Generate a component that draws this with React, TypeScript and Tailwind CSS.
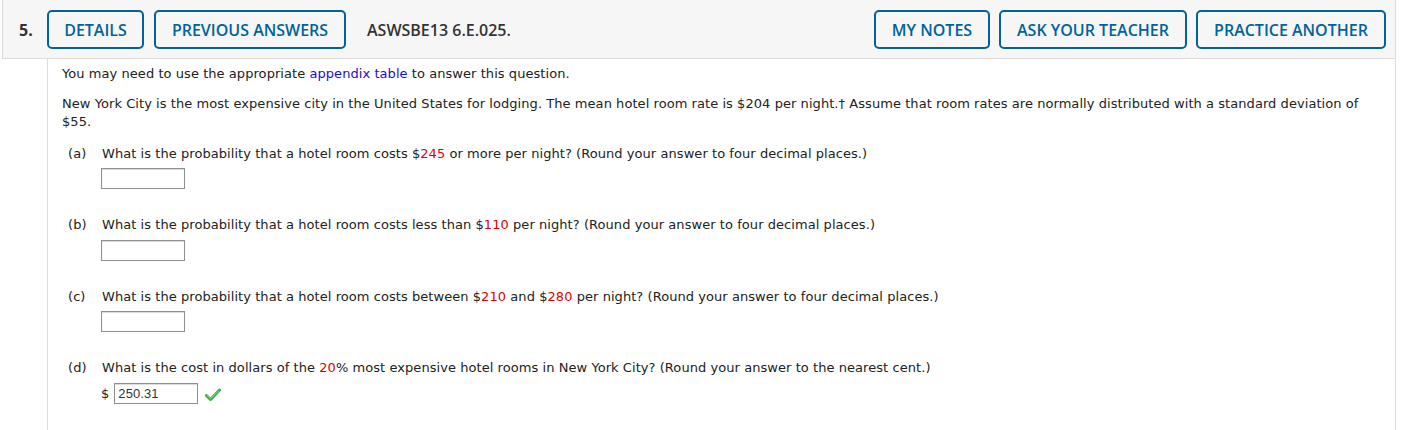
import React from "react";

const btn =
  "h-[39px] flex items-center justify-center border-2 border-[#0063a0] rounded-[5px] text-[#00639c] text-[16px] font-semibold bg-[#f6f6f6] whitespace-nowrap";

function Box({ value }: { value?: string }) {
  return (
    <div className="w-[84px] h-[21px] border border-[#8f8f8f] bg-white shadow-[inset_0_1px_1px_rgba(0,0,0,0.15)] flex items-center px-[3px] text-[13px] text-[#333]" style={{ fontFamily: '"Liberation Sans", Arial, sans-serif' }}>
      {value}
    </div>
  );
}

function Red({ children }: { children: React.ReactNode }) {
  return <span className="text-[#e00000]">{children}</span>;
}

export default function App() {
  return (
    <div className="w-[1408px] h-[430px] bg-white overflow-hidden">
      <div
        className="ml-[2px] w-[1394px] h-[59px] bg-[#f6f6f6] border-l border-r border-b border-[#dcdcdc] flex items-center pt-[1px]"
        style={{ fontFamily: '"Open Sans", sans-serif' }}
      >
        <div className="w-[44px] pl-[16px] text-[16px] font-bold text-[#333]">5.</div>
        <div className="flex gap-[10px]">
          <div className={btn + " w-[97px]"}>DETAILS</div>
          <div className={btn + " w-[192px]"}>PREVIOUS ANSWERS</div>
        </div>
        <div className="ml-[21px] text-[16px] font-semibold text-[#333]">ASWSBE13 6.E.025.</div>
        <div className="ml-auto mr-[9px] flex gap-[9px]">
          <div className={btn + " w-[116px]"}>MY NOTES</div>
          <div className={btn + " w-[188px]"}>ASK YOUR TEACHER</div>
          <div className={btn + " w-[190px]"}>PRACTICE ANOTHER</div>
        </div>
      </div>
      <div
        className="ml-[47px] w-[1349px] h-[371px] border-l border-r border-[#dcdcdc] pl-[14px] pr-[20px] pt-[6px] text-[13px] text-[#222] leading-[18px] tracking-[0.06px]"
        style={{ fontFamily: '"DejaVu Sans", Verdana, sans-serif' }}
      >
        <p>
          You may need to use the appropriate <span className="text-[#1a0dd6]">appendix table</span> to answer this question.
        </p>
        <p className="mt-[12px]">
          New York City is the most expensive city in the United States for lodging. The mean hotel room rate is $204 per night.<span className="text-[#1a0dd6]">†</span> Assume that room rates are normally distributed with a standard deviation of $55.
        </p>
        <div className="mt-[14px]">
          <div className="flex">
            <span className="w-[40px] pl-[6px]">(a)</span>
            <span>What is the probability that a hotel room costs $<Red>245</Red> or more per night? (Round your answer to four decimal places.)</span>
          </div>
          <div className="ml-[39px] mt-[5px]"><Box /></div>
        </div>
        <div className="mt-[27px]">
          <div className="flex">
            <span className="w-[40px] pl-[6px]">(b)</span>
            <span>What is the probability that a hotel room costs less than $<Red>110</Red> per night? (Round your answer to four decimal places.)</span>
          </div>
          <div className="ml-[39px] mt-[6px]"><Box /></div>
        </div>
        <div className="mt-[27px]">
          <div className="flex">
            <span className="w-[40px] pl-[6px]">(c)</span>
            <span>What is the probability that a hotel room costs between $<Red>210</Red> and $<Red>280</Red> per night? (Round your answer to four decimal places.)</span>
          </div>
          <div className="ml-[39px] mt-[5px]"><Box /></div>
        </div>
        <div className="mt-[27px]">
          <div className="flex">
            <span className="w-[40px] pl-[6px]">(d)</span>
            <span>What is the cost in dollars of the <Red>20</Red>% most expensive hotel rooms in New York City? (Round your answer to the nearest cent.)</span>
          </div>
          <div className="ml-[39px] mt-[6px] flex items-center gap-[5px]">
            <span>$</span>
            <Box value="250.31" />
            <svg width="16" height="14" viewBox="0 0 16 14" className="ml-[2px] mt-[2px]">
              <path d="M1.5 7.5 L5.5 11.5 L14.5 2" fill="none" stroke="#3fa83f" strokeWidth="3" strokeLinecap="round" strokeLinejoin="round" />
              <path d="M2.2 7.4 L5.5 10.6 L13.8 2.6" fill="none" stroke="#8fdc8f" strokeWidth="1" strokeLinecap="round" />
            </svg>
          </div>
        </div>
      </div>
    </div>
  );
}
